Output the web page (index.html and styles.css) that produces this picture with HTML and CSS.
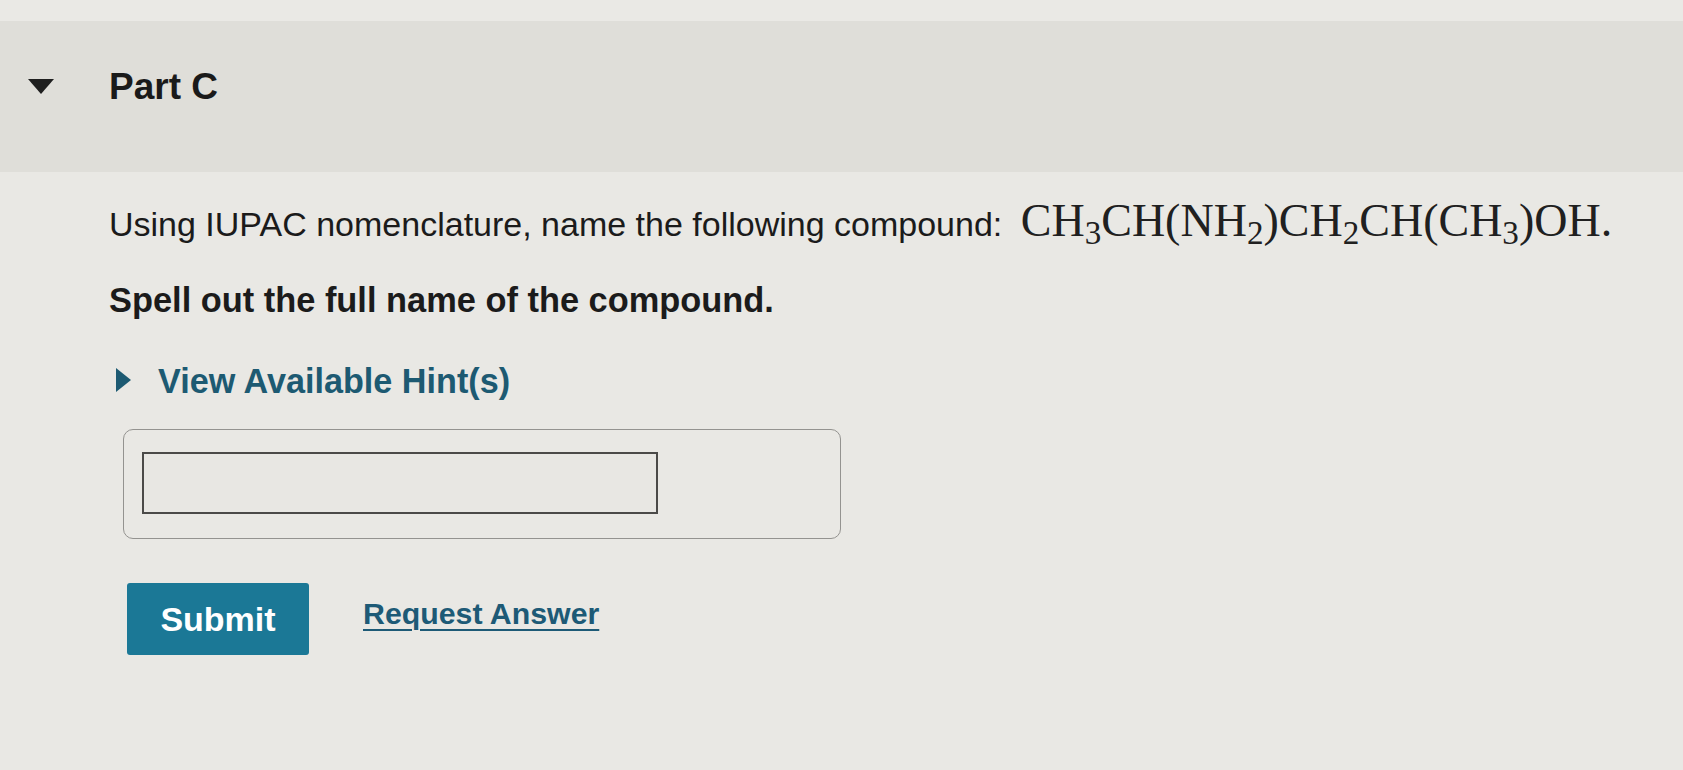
FILE: index.html
```html
<!DOCTYPE html>
<html lang="en">
<head>
<meta charset="utf-8">
<title>Part C</title>
<link rel="stylesheet" href="styles.css">
</head>
<body>
  <div class="page">
    <div class="top-strip"></div>
    <header class="part-header">
      <span class="caret-down" aria-hidden="true"></span>
      <h2 class="part-title">Part C</h2>
    </header>

    <section class="part-body">
      <p class="prompt">Using IUPAC nomenclature, name the following compound: <span class="formula">CH<sub>3</sub>CH(NH<sub>2</sub>)CH<sub>2</sub>CH(CH<sub>3</sub>)OH.</span></p>
      <p class="instruction">Spell out the full name of the compound.</p>

      <div class="hints">
        <span class="caret-right" aria-hidden="true"></span>
        <span class="hints-label">View Available Hint(s)</span>
      </div>

      <div class="answer-box">
        <input class="answer-input" type="text" aria-label="Answer">
      </div>

      <div class="actions">
        <button class="submit-btn" type="button">Submit</button>
        <a class="request-link" href="#">Request Answer</a>
      </div>
    </section>
  </div>
</body>
</html>
```

FILE: styles.css
```css
html, body {
  margin: 0;
  padding: 0;
}

body {
  background: #e9e8e4;
  color: #1b1b1b;
  font-family: "Liberation Sans", Arial, sans-serif;
  width: 1683px;
  height: 770px;
  overflow: hidden;
}

.top-strip {
  height: 21px;
  background: #eae9e5;
}

/* collapsible part header band */
.part-header {
  box-sizing: border-box;
  height: 151px;
  padding: 46px 0 0 28px;
  background: #dfded9;
  display: flex;
  align-items: flex-start;
}

.caret-down {
  width: 0;
  height: 0;
  margin-top: 12px;
  border-left: 13px solid transparent;
  border-right: 13px solid transparent;
  border-top: 15px solid #1f1f1f;
}

.part-title {
  margin: 0 0 0 55px;
  font-size: 37px;
  line-height: 40px;
  font-weight: 700;
  color: #1a1a1a;
}

.part-body {
  padding: 32px 0 0 109px;
}

.prompt {
  margin: 0;
  font-size: 34px;
  line-height: 40px;
  white-space: nowrap;
}

.formula {
  font-family: "Liberation Serif", "Times New Roman", serif;
  font-size: 46px;
  line-height: 20px;
  margin-left: 9px;
  color: #202020;
}

.formula sub {
  font-size: 0.72em;
  line-height: 0;
  vertical-align: -0.24em;
}

.instruction {
  margin: 36px 0 0;
  font-size: 34.4px;
  line-height: 40px;
  font-weight: 700;
}

.hints {
  margin-top: 41px;
  display: flex;
  align-items: center;
  gap: 27px;
  height: 40px;
  color: #1d5a72;
}

.caret-right {
  width: 0;
  height: 0;
  margin-left: 7px;
  margin-top: -3px;
  border-top: 12px solid transparent;
  border-bottom: 12px solid transparent;
  border-left: 15px solid #1d5a72;
}

.hints-label {
  font-size: 34.2px;
  line-height: 40px;
  font-weight: 700;
}

.answer-box {
  box-sizing: border-box;
  width: 718px;
  height: 110px;
  margin: 28px 0 0 14px;
  padding: 22px 0 0 18px;
  border: 1.5px solid #949390;
  border-radius: 10px;
}

.answer-input {
  box-sizing: border-box;
  display: block;
  width: 516px;
  height: 62px;
  margin: 0;
  border: 2px solid #4b4a48;
  border-radius: 0;
  background: #e8e7e3;
  font-size: 28px;
}

.actions {
  margin: 44px 0 0 18px;
  display: flex;
  align-items: center;
  gap: 54px;
}

.submit-btn {
  box-sizing: border-box;
  width: 182px;
  height: 72px;
  border: none;
  border-radius: 3px;
  background: #1b7896;
  color: #ffffff;
  font-family: "Liberation Sans", Arial, sans-serif;
  font-size: 34px;
  font-weight: 700;
  padding: 0;
}

.request-link {
  margin-bottom: 10px;
  color: #1d5a76;
  font-size: 30.3px;
  font-weight: 700;
  text-decoration: underline;
  text-underline-offset: 5px;
  text-decoration-thickness: 2px;
}
```
